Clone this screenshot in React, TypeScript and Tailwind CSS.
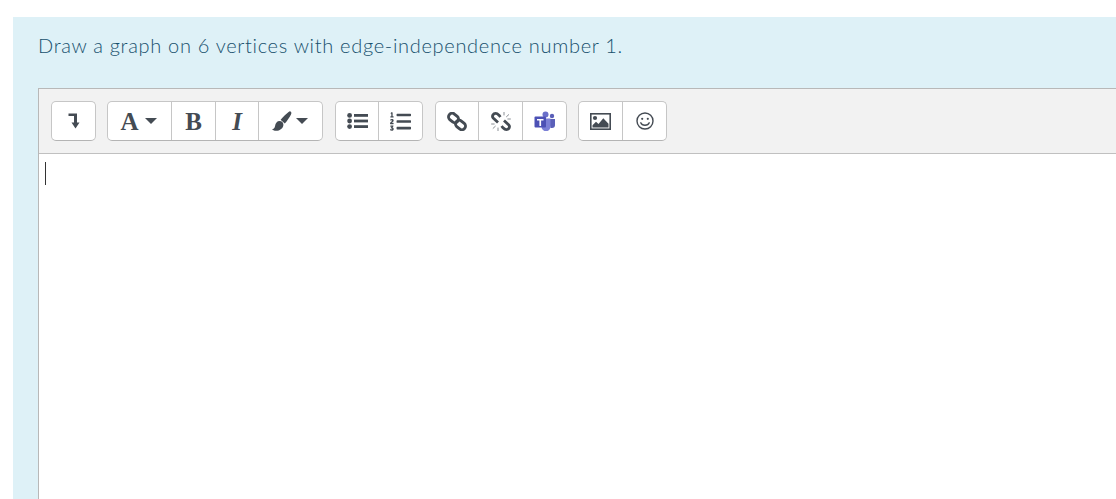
import { FaListOl } from 'react-icons/fa';
import type { ReactNode } from 'react';

const Caret = ({ className = 'ml-[6px]' }: { className?: string }) => (
  <span className={`h-0 w-0 border-x-[6px] border-t-[6px] border-x-transparent border-t-[#444b53] ${className}`} />
);

function Btn({ w, children }: { w: string; children: ReactNode }) {
  return (
    <div className={`flex h-full items-center justify-center border-r border-[#c6c6c6] last:border-r-0 ${w}`}>
      {children}
    </div>
  );
}

function Group({ mr, children }: { mr?: boolean; children: ReactNode }) {
  return (
    <div className={`flex h-[40px] rounded-[5px] border border-[#c6c6c6] border-b-[#b4b4b4] bg-white text-[#444b53] ${mr ? 'mr-px' : ''}`}>
      {children}
    </div>
  );
}

const LevelDown = () => (
  <svg width="12" height="16" viewBox="0 0 12 16" fill="#444b53">
    <path d="M0.5 0.5H9V9.5H11.5L7.5 15.5L3.5 9.5H6V3H0.5z" />
  </svg>
);

const Brush = () => (
  <svg width="20" height="20" viewBox="0 0 20 20" fill="#444b53">
    <path d="M18.4 0.4c1.2 0.5 1.2 1.8 0.6 3C17.6 6.2 15.2 9.8 12.8 12.4L8.6 8.8C11.2 5.6 14.6 2.4 16.6 0.9c0.6-0.4 1.2-0.7 1.8-0.5z" />
    <path d="M7.6 10c2.1 0 3.9 1.6 3.8 3.7C11.3 17.2 8 19.8 4 19.8c-1.8 0-3.5-0.6-4-1.5 1.8-0.3 2.6-1.1 3-3C3.5 12 5 10 7.6 10z" />
  </svg>
);

const ListUl = () => (
  <svg width="21" height="16" viewBox="0 0 21 16" fill="#444b53">
    <circle cx="2.6" cy="2.4" r="2.4" />
    <circle cx="2.6" cy="8" r="2.4" />
    <circle cx="2.6" cy="13.6" r="2.4" />
    <rect x="7" y="1" width="14" height="2.8" />
    <rect x="7" y="6.6" width="14" height="2.8" />
    <rect x="7" y="12.2" width="14" height="2.8" />
  </svg>
);

const Link = () => (
  <svg width="20" height="19" viewBox="0 0 20 19" fill="none" stroke="#444b53" strokeWidth="2.9">
    <rect x="1.2" y="2.4" width="10.6" height="7.2" rx="3.4" transform="rotate(40 6.5 6)" />
    <rect x="8.2" y="9.4" width="10.6" height="7.2" rx="3.4" transform="rotate(40 13.5 13)" />
  </svg>
);

const Unlink = () => (
  <svg width="20" height="19" viewBox="0 0 20 19" fill="none" stroke="#444b53" strokeWidth="2.8">
    <path d="M7 10.5L2.2 6C0.6 4.2 2.2 1.4 4.6 1.4C6.2 1.4 7 2.2 8 3.2L9.4 5" />
    <path d="M13 8.5L17.8 13C19.4 14.8 17.8 17.6 15.4 17.6C13.8 17.6 13 16.8 12 15.8L10.6 14" />
    <path d="M13 0V3.4M15.2 5L18 2.4M16.4 7H19.8M0.2 12H3.6M1.8 16.6L4.6 14M7 15.6V19" stroke="#8a8f95" strokeWidth="1" />
  </svg>
);

const ImageIcon = () => (
  <svg width="21" height="17" viewBox="0 0 21 17">
    <rect x="0.8" y="0.8" width="19.4" height="15.4" fill="#fff" stroke="#444b53" strokeWidth="1.6" />
    <circle cx="5" cy="5" r="2.1" fill="#444b53" />
    <path d="M2.5 14.5V12.2L6 8.8L8.5 11L13.3 5.2L18.5 10.8V14.5z" fill="#444b53" />
  </svg>
);

const Smile = () => (
  <svg width="18" height="18" viewBox="0 0 18 18" fill="none" stroke="#444b53" strokeWidth="1.4">
    <circle cx="9" cy="9" r="8" />
    <circle cx="6.2" cy="6.8" r="1.1" fill="#444b53" stroke="none" />
    <circle cx="11.8" cy="6.8" r="1.1" fill="#444b53" stroke="none" />
    <path d="M4.8 10.8C6 14 12 14 13.2 10.8" strokeLinecap="round" />
  </svg>
);

function TeamsIcon() {
  return (
    <svg width="22" height="20" viewBox="0 0 22 20">
      <circle cx="11.5" cy="3.6" r="3" fill="#6a6fc9" />
      <circle cx="18" cy="5" r="2.2" fill="#5a5fb8" />
      <path d="M14.5 8h6.5v6a3 3 0 0 1-3 3h-1.5z" fill="#5a5fb8" />
      <path d="M6.5 7.5h10v8a4.5 4.5 0 0 1-9 .5z" fill="#7b80d6" />
      <rect x="0.5" y="5.5" width="11.5" height="11" rx="1" fill="#4c51b5" />
      <path d="M3 8h6.5v1.5H7.1V15H5.4V9.5H3z" fill="#fff" />
    </svg>
  );
}

export default function App() {
  return (
    <div className="h-[499px] w-[1116px] overflow-hidden bg-white pl-[13px] pt-[17px]">
      <div className="h-[482px] overflow-hidden bg-[#def1f7] pl-[25px]">
        <p className="h-[71px] pt-[15px] text-[20px] font-light leading-[26px] tracking-[0.69px] text-[#17506d] [font-family:'Lato',sans-serif]">
          Draw a graph on 6 vertices with edge-independence number 1.
        </p>
        <div className="h-[411px] border-l border-t border-[#b8b8b8] bg-white">
          <div className="flex h-[65px] gap-[11px] border-b border-[#c0c0c0] bg-[#f2f2f2] pl-[12px] pt-[12px]">
            <Group>
              <Btn w="w-[43px]"><LevelDown /></Btn>
            </Group>
            <Group mr>
              <Btn w="w-[64px]">
                <span className="-ml-px text-[25px] font-bold leading-none [font-family:'Liberation_Serif',serif]">A</span>
                <Caret className="ml-[6px] mr-px" />
              </Btn>
              <Btn w="w-[44px]"><span className="text-[25px] font-bold leading-none [font-family:'Liberation_Serif',serif]">B</span></Btn>
              <Btn w="w-[43px]"><span className="text-[25px] font-bold italic leading-none [font-family:'Liberation_Serif',serif]">I</span></Btn>
              <Btn w="w-[63px]">
                <span className="-ml-px flex items-center">
                  <Brush />
                  <Caret className="ml-[4px] mr-px" />
                </span>
              </Btn>
            </Group>
            <Group mr>
              <Btn w="w-[43px]"><ListUl /></Btn>
              <Btn w="w-[43px]"><FaListOl className="h-[21px] w-[21px]" /></Btn>
            </Group>
            <Group>
              <Btn w="w-[43px]"><Link /></Btn>
              <Btn w="w-[44px]"><Unlink /></Btn>
              <Btn w="w-[43px]"><TeamsIcon /></Btn>
            </Group>
            <Group>
              <Btn w="w-[44px]"><ImageIcon /></Btn>
              <Btn w="w-[43px]"><Smile /></Btn>
            </Group>
          </div>
          <div className="pl-[6px] pt-[8px]">
            <div className="h-[23px] w-px bg-[#333]" />
          </div>
        </div>
      </div>
    </div>
  );
}
